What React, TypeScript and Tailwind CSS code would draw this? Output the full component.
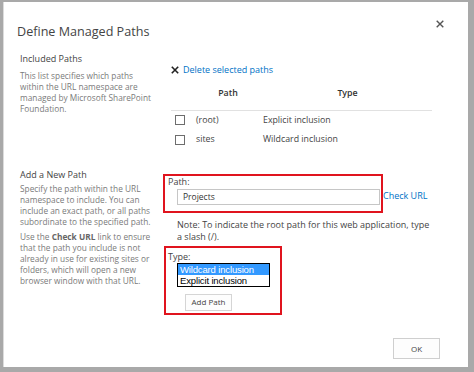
import React from 'react';

const paths = [
  { path: '(root)', type: 'Explicit inclusion' },
  { path: 'sites', type: 'Wildcard inclusion' },
];

const App = () => {
  return (
    <div className="w-[474px] h-[372px] bg-[#a9a9a9] pt-[2px] pl-[3px] pr-[6px] pb-[5px] flex font-['Open_Sans',sans-serif]">
      <div className="flex-1 bg-white border-l border-[#dcdcdc] flex flex-col">
        {/* title */}
        <div className="flex items-start justify-between pl-[13px] pr-[24px] pt-[18px]">
          <h1 className="mt-[3px] text-[12.6px] leading-[18px] text-[#444]">Define Managed Paths</h1>
          <svg width="8" height="8" viewBox="0 0 8 8">
            <path d="M0.7 0.7L7.3 7.3M7.3 0.7L0.7 7.3" stroke="#555" strokeWidth="1.4" />
          </svg>
        </div>

        {/* included paths */}
        <div className="grid grid-cols-[159px_1fr] mt-[12px]">
          <div className="pl-[16px] pr-[12px]">
            <h2 className="text-[9px] leading-[12px] text-[#444]">Included Paths</h2>
            <p className="mt-[5px] text-[8.3px] leading-[11px] text-[#7a7a7a]">
              This list specifies which paths within the URL namespace are managed by Microsoft SharePoint Foundation.
            </p>
          </div>
          <div className="pl-[8px] pr-[36px] pt-[10px]">
            <div className="flex items-center gap-[4px] h-[14px]">
              <svg width="8" height="8" viewBox="0 0 8 8">
                <path d="M0.8 0.8L7.2 7.2M7.2 0.8L0.8 7.2" stroke="#222" strokeWidth="1.6" />
              </svg>
              <span className="text-[9px] text-[#0072c6]">Delete selected paths</span>
            </div>
            <table className="w-full mt-[9px] text-[8.8px] text-[#444]">
              <thead>
                <tr className="border-b border-[#e1e1e1]">
                  <th className="w-[22px] h-[24px]"></th>
                  <th className="w-[70px] font-semibold text-[#333] text-center align-top pt-[1px]">Path</th>
                  <th className="font-semibold text-[#333] text-center align-top pt-[1px]">Type</th>
                </tr>
              </thead>
              <tbody>
                {paths.map((p) => (
                  <tr key={p.path} className="h-[20px]">
                    <td>
                      <div className="w-[10px] h-[10px] border border-[#6d6d6d] bg-white ml-[4px]" />
                    </td>
                    <td className="pl-[3px]">{p.path}</td>
                    <td>{p.type}</td>
                  </tr>
                ))}
              </tbody>
            </table>
          </div>
        </div>

        {/* add a new path */}
        <div className="grid grid-cols-[159px_1fr] mt-[17px]">
          <div className="pl-[16px] pr-[12px] pt-[2px]">
            <h2 className="text-[9px] leading-[12px] text-[#444]">Add a New Path</h2>
            <p className="mt-[2px] text-[8.3px] leading-[11px] text-[#7a7a7a]">
              Specify the path within the URL namespace to include. You can include an exact path, or all paths subordinate to the specified path.
            </p>
            <p className="mt-[4px] text-[8.3px] leading-[11px] text-[#7a7a7a]">
              Use the <b className="inline-block leading-[11px] font-bold text-[#666]">Check URL</b> link to ensure that the path you include is not already in use for existing sites or folders, which will open a new browser window with that URL.
            </p>
          </div>
          <div className="pt-[7px]">
            <div className="flex items-end">
              <div className="w-[220px] border-2 border-[#e0141e] pl-[3px] pr-[1px] pb-[6px]">
                <div className="text-[9px] leading-[12px] text-[#444]">Path:</div>
                <div className="ml-[9px] mt-[1px] h-[16px] border border-[#c6c6c6] flex items-center pl-[5px] text-[8.5px] text-[#333]">Projects</div>
              </div>
              <span className="text-[9px] leading-[12px] text-[#0072c6] mb-[11px]">Check URL</span>
            </div>
            <p className="ml-[14px] mt-[6px] w-[256px] text-[9px] leading-[12px] text-[#444]">
              Note: To indicate the root path for this web application, type a slash (/).
            </p>
            <div className="w-[118px] ml-[1px] border-2 border-[#e0141e] mt-[3px] pl-[2px] pt-[3px] pb-[2px]">
              <div className="text-[9px] leading-[12px] text-[#444]">Type:</div>
              <div className="ml-[9px] w-[93px] border border-black font-['Liberation_Sans',sans-serif] text-[9.5px] leading-[11px] tracking-[-0.15px]">
                <div className="bg-[#3399ff] text-white h-[11px] pl-[2px]">Wildcard inclusion</div>
                <div className="text-black h-[11px] pl-[2px]">Explicit inclusion</div>
              </div>
              <button className="ml-[17px] mt-[1px] w-[47px] h-[17px] border border-[#d5d5d5] bg-[#fdfdfd] text-[8px] text-[#444]">Add Path</button>
            </div>
          </div>
        </div>

        <div className="flex-1 flex items-end justify-end pr-[28px] pb-[8px]">
          <button className="w-[47px] h-[21px] border border-[#cfcfcf] bg-[#fdfdfd] text-[8px] text-[#444]">OK</button>
        </div>
      </div>
    </div>
  );
};

export default App;
